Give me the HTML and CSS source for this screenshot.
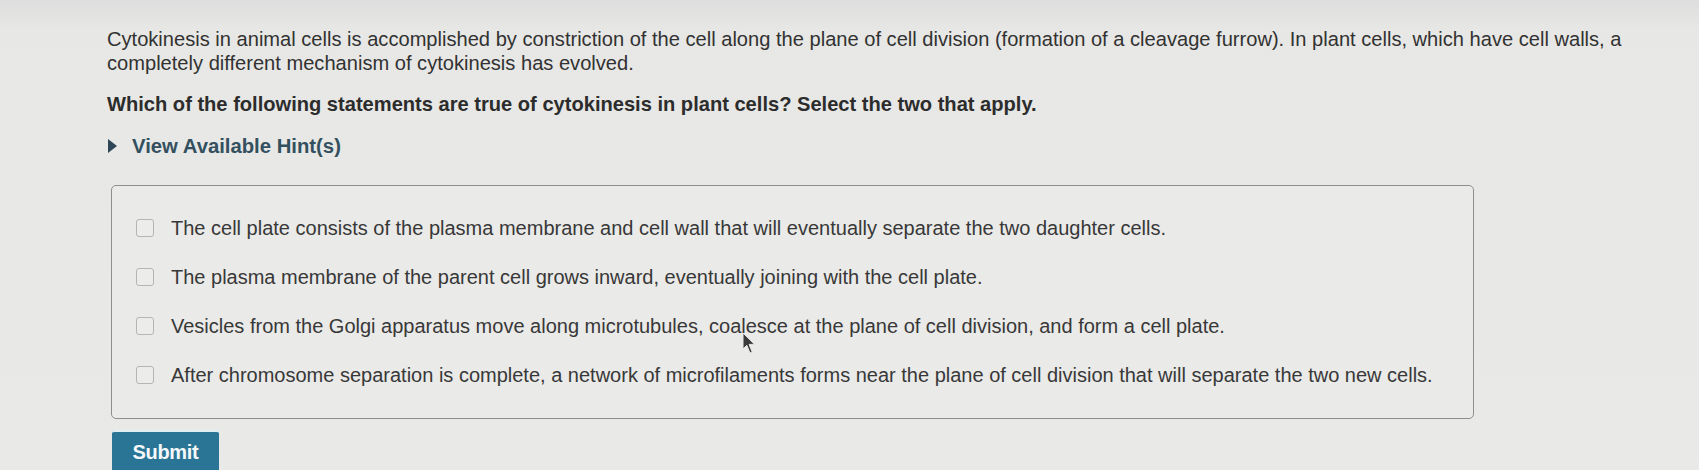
FILE: index.html
```html
<!DOCTYPE html>
<html lang="en">
<head>
<meta charset="utf-8">
<title>Cytokinesis question</title>
<link rel="stylesheet" href="styles.css">
</head>
<body>
<main class="page">
  <p class="intro">Cytokinesis in animal cells is accomplished by constriction of the cell along the plane of cell division (formation of a cleavage furrow). In plant cells, which have cell walls, a completely different mechanism of cytokinesis has evolved.</p>
  <p class="question">Which of the following statements are true of cytokinesis in plant cells? Select the two that apply.</p>
  <div class="hint">
    <span class="hint-caret"></span>
    <span class="hint-label">View Available Hint(s)</span>
  </div>
  <div class="choices">
    <label class="choice"><span class="box"></span><span class="choice-text">The cell plate consists of the plasma membrane and cell wall that will eventually separate the two daughter cells.</span></label>
    <label class="choice"><span class="box"></span><span class="choice-text">The plasma membrane of the parent cell grows inward, eventually joining with the cell plate.</span></label>
    <label class="choice"><span class="box"></span><span class="choice-text">Vesicles from the Golgi apparatus move along microtubules, coalesce at the plane of cell division, and form a cell plate.</span></label>
    <label class="choice"><span class="box"></span><span class="choice-text">After chromosome separation is complete, a network of microfilaments forms near the plane of cell division that will separate the two new cells.</span></label>
    <svg class="cursor" width="14" height="23" viewBox="0 0 14 23"><path d="M1 1 L1 17 L4.8 13.3 L8 21 L10.2 20 L7.1 12.4 L12.5 12.3 Z" fill="#3a3a3a" stroke="#e8e8e6" stroke-width="1"/></svg>
  </div>
  <button class="submit" type="button">Submit</button>
</main>
</body>
</html>
```
FILE: styles.css
```css
html, body {
  margin: 0;
  padding: 0;
}
body {
  background: linear-gradient(180deg, #dedede 0px, #e7e7e5 30px, #e9e9e7 100%);
  font-family: "Liberation Sans", Arial, sans-serif;
  color: #323232;
  height: 470px;
  overflow: hidden;
}
.page {
  padding: 27px 0 0 107px;
  width: 1540px;
}
.intro {
  margin: 0;
  font-size: 20.1px;
  line-height: 24px;
}
.question {
  margin: 17px 0 0;
  font-size: 20.1px;
  line-height: 24px;
  font-weight: bold;
  color: #2c2c2c;
}
.hint {
  margin-top: 18px;
  display: flex;
  align-items: center;
  gap: 15px;
  height: 24px;
  padding-left: 1px;
}
.hint-caret {
  width: 0;
  height: 0;
  border-top: 7px solid transparent;
  border-bottom: 7px solid transparent;
  border-left: 9px solid #2f4656;
}
.hint-label {
  font-size: 20.3px;
  font-weight: bold;
  color: #34505f;
}
.choices {
  position: relative;
  margin-top: 27px;
  margin-left: 4px;
  width: 1363px;
  border: 1px solid #8e8e8c;
  border-radius: 5px;
  padding: 30px 0 31px 24px;
  box-sizing: border-box;
  display: flex;
  flex-direction: column;
  gap: 25px;
  background: #eaeae8;
}
.choice {
  display: flex;
  align-items: center;
  gap: 17px;
  height: 24px;
}
.box {
  width: 16px;
  height: 16px;
  border: 1px solid #b5b5b3;
  border-radius: 3px;
  background: #ececea;
  flex: none;
}
.choice-text {
  font-size: 20px;
  line-height: 24px;
  color: #383838;
}
.cursor {
  position: absolute;
  left: 630px;
  top: 146px;
}
.submit {
  display: block;
  margin: 11px 0 0 5px;
  width: 107px;
  height: 46px;
  padding: 0 0 4px;
  border: none;
  border-top: 2px solid #e0eef2;
  border-radius: 3px 3px 0 0;
  background: #2a7595;
  color: #f4f8fa;
  font-family: "Liberation Sans", Arial, sans-serif;
  font-size: 20px;
  font-weight: bold;
  letter-spacing: -0.3px;
}
```
